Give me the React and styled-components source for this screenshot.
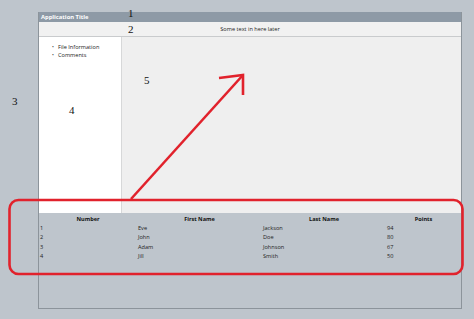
import React from "react";
import styled, { createGlobalStyle } from "styled-components";

const Global = createGlobalStyle`
  html, body { margin: 0; padding: 0; }
  body { background: #bec5cc; font-family: "Open Sans", "Liberation Sans", sans-serif; }
`;

const Page = styled.div`
  position: relative;
  width: 474px;
  height: 319px;
  box-sizing: border-box;
  padding: 12px 12px 10px 38px;
  background: #bec5cc;
  overflow: hidden;
`;

const Window = styled.div`
  width: 424px;
  height: 297px;
  box-sizing: border-box;
  border: 1px solid #8c949b;
  border-top: none;
  display: flex;
  flex-direction: column;
  background: #bec5cc;
`;

const TitleBar = styled.div`
  height: 10px;
  background: #8e9aa6;
  color: #fff;
  font-weight: 700;
  font-size: 5.8px;
  line-height: 10px;
  padding-left: 2px;
  white-space: nowrap;
`;

const SubBar = styled.div`
  height: 14px;
  background: #f1f1f1;
  border-bottom: 1px solid #c9cbcd;
  font-size: 5.6px;
  line-height: 14px;
  text-align: center;
  color: #222;
`;

const Main = styled.div`
  display: flex;
  height: 176px;
`;

const Side = styled.div`
  width: 82px;
  background: #fff;
  border-right: 1px solid #d7d8d9;
`;

const Content = styled.div`
  flex: 1;
  background: #efefef;
`;

const Menu = styled.ul`
  margin: 0;
  padding: 6px 0 0 19px;
  font-size: 5.6px;
  line-height: 8px;
  color: #222;
  list-style: none;
`;

const Item = styled.li`
  position: relative;
  &::before {
    content: "•";
    position: absolute;
    left: -6px;
    top: 0;
    font-size: 5px;
    color: #444;
  }
`;

const Table = styled.div`
  display: grid;
  grid-template-columns: 98px 125px 124px 1fr;
  padding-top: 2px;
  font-size: 5.6px;
  color: #222;
`;

const Head = styled.div`
  height: 9px;
  line-height: 9px;
  text-align: center;
  font-weight: 700;
  color: #111;
`;

const Cell = styled.div`
  height: 9.3px;
  line-height: 9.3px;
  padding-left: 1px;
`;

const Mark = styled.div`
  position: absolute;
  left: ${(p) => p.x}px;
  top: ${(p) => p.y}px;
  font-family: "Liberation Serif", serif;
  font-size: 11px;
  line-height: 11px;
  color: #111;
`;

const Overlay = styled.svg`
  position: absolute;
  left: 0;
  top: 0;
  pointer-events: none;
`;

const rows = [
  ["1", "Eve", "Jackson", "94"],
  ["2", "John", "Doe", "80"],
  ["3", "Adam", "Johnson", "67"],
  ["4", "Jill", "Smith", "50"],
];

export default function App() {
  return (
    <>
      <Global />
      <Page>
        <Window>
          <TitleBar>Application Title</TitleBar>
          <SubBar>Some text in here later</SubBar>
          <Main>
            <Side>
              <Menu>
                <Item>File Information</Item>
                <Item>Comments</Item>
              </Menu>
            </Side>
            <Content />
          </Main>
          <Table>
            <Head>Number</Head>
            <Head>First Name</Head>
            <Head>Last Name</Head>
            <Head>Points</Head>
            {rows.map((r) =>
              r.map((c, i) => <Cell key={r[0] + i}>{c}</Cell>)
            )}
          </Table>
        </Window>
        <Mark x={128} y={8}>1</Mark>
        <Mark x={128} y={24}>2</Mark>
        <Mark x={12} y={96}>3</Mark>
        <Mark x={69} y={105}>4</Mark>
        <Mark x={144} y={75}>5</Mark>
        <Overlay width="474" height="319" viewBox="0 0 474 319">
          <rect x="9.5" y="200" width="453" height="74" rx="9" fill="none" stroke="#e1222c" strokeWidth="2.6" />
          <line x1="131" y1="199" x2="243" y2="75" stroke="#e1222c" strokeWidth="2.6" />
          <polyline points="219,78 243,75 243,95" fill="none" stroke="#e1222c" strokeWidth="2.6" />
        </Overlay>
      </Page>
    </>
  );
}
